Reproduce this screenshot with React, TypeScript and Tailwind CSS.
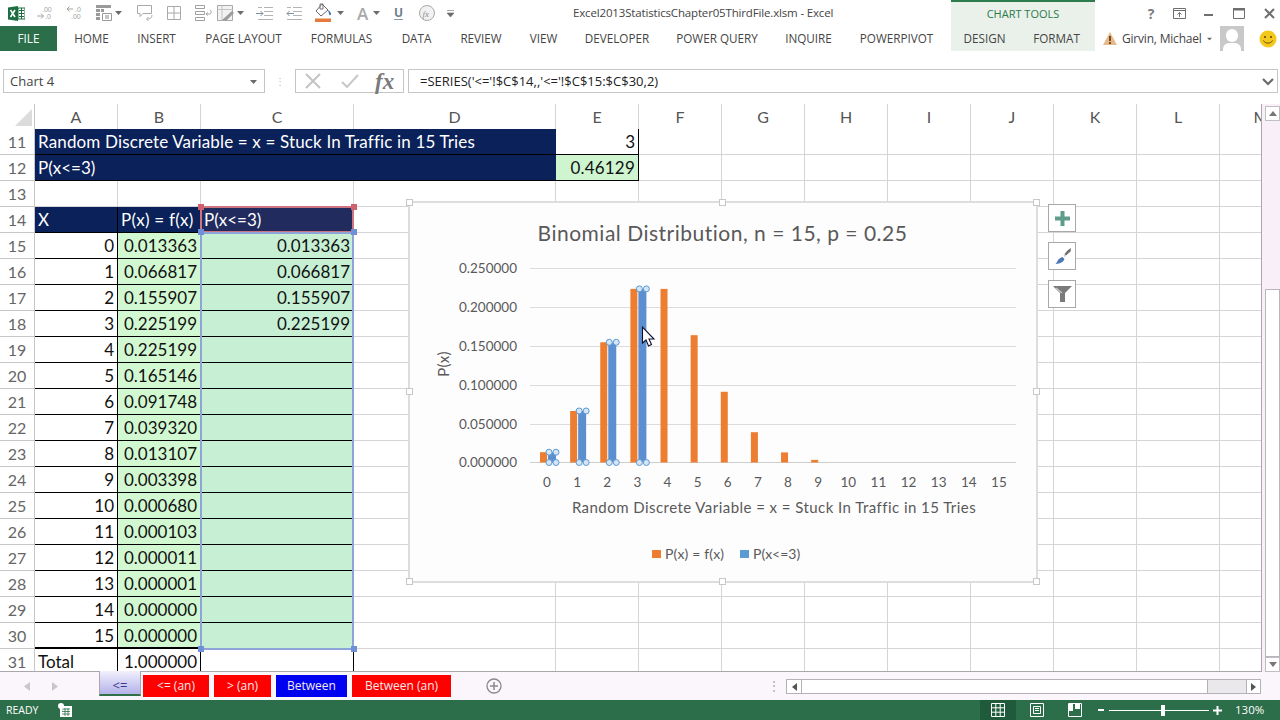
import React from 'react';

const ui = "font-['Open_Sans',sans-serif]";
const cal = "font-['Lato',sans-serif]";

const tabs = [
  { label: 'HOME', w: 'w-[69px]' },
  { label: 'INSERT', w: 'w-[61px]' },
  { label: 'PAGE LAYOUT', w: 'w-[113px]' },
  { label: 'FORMULAS', w: 'w-[83px]' },
  { label: 'DATA', w: 'w-[67px]' },
  { label: 'REVIEW', w: 'w-[62px]' },
  { label: 'VIEW', w: 'w-[63px]' },
  { label: 'DEVELOPER', w: 'w-[84px]' },
  { label: 'POWER QUERY', w: 'w-[116px]' },
  { label: 'INQUIRE', w: 'w-[67px]' },
  { label: 'POWERPIVOT', w: 'w-[109px]' },
];

const columns = ['A', 'B', 'C', 'D', 'E', 'F', 'G', 'H', 'I', 'J', 'K', 'L', 'M'];
const gridCols = 'grid grid-cols-[35px_83px_83px_153px_202px_83px_83px_83px_83px_83px_83px_83px_83px_83px] grid-rows-[25px] auto-rows-[26px]';
const cell = 'border-r border-b border-[#d6d4d8]';
const rowHead = `border-r border-b border-[#c8c6ca] flex items-center justify-center text-[16px] text-[#666666] ${cal}`;

const values = [
  '0.013363', '0.066817', '0.155907', '0.225199', '0.225199', '0.165146', '0.091748', '0.039320',
  '0.013107', '0.003398', '0.000680', '0.000103', '0.000011', '0.000001', '0.000000', '0.000000',
];
const heights = values.map(Number);

const Empties = ({ n }: { n: number }) => (
  <>
    {Array.from({ length: n }).map((_, i) => (
      <div key={i} className={cell} />
    ))}
  </>
);

const Caret = ({ className = '' }: { className?: string }) => (
  <svg width="7" height="4" viewBox="0 0 7 4" className={className}>
    <path d="M0 0h7L3.500 4z" fill="#6b6b6b" />
  </svg>
);

const QuickAccess = () => (
  <div className="flex items-center w-[573px] h-full">
    <svg width="17" height="15" viewBox="0 0 17 15" className="ml-[8px]">
      <path d="M0 1.500 10 0v15L0 13.500z" fill="#1d6f42" />
      <path d="M10 2h7v11h-7z" fill="#fff" stroke="#1d6f42" />
      <path d="M11 4.500h5M11 7.500h5M11 10.500h5M13.500 2v11" stroke="#1d6f42" />
      <path d="M2.500 4 7 11M7 4l-4.500 7" stroke="#fff" strokeWidth="1.600" />
    </svg>
    <svg width="16" height="16" viewBox="0 0 16 16" className="ml-[12px]" fill="#a3a3a3" fontSize="7" fontFamily="Liberation Sans">
      <text x="5" y="6.500">.00</text>
      <text x="8" y="14">.0</text>
      <path d="M0 11h6M4 8.500 6.500 11 4 13.500" stroke="#a3a3a3" fill="none" />
    </svg>
    <svg width="16" height="16" viewBox="0 0 16 16" className="ml-[13px]" fill="#a3a3a3" fontSize="7" fontFamily="Liberation Sans">
      <text x="9" y="6.500">.0</text>
      <text x="5" y="14">.00</text>
      <path d="M7 4H1M3.500 1.500 1 4l2.500 2.500" stroke="#a3a3a3" fill="none" />
    </svg>
    <svg width="17" height="16" viewBox="0 0 17 16" className="ml-[14px]">
      <path d="M0 0h15v3H0zM0 4h4v3H0zM0 8h4v3H0zM0 12h4v3H0zM5 4h3v3H5z" fill="#9a9a9a" />
      <path d="M6.500 8.500h9v7h-9z" fill="#fff" stroke="#9a9a9a" />
      <path d="M9 11h4M9 13h4" stroke="#8a8a8a" />
    </svg>
    <Caret className="ml-[2px]" />
    <svg width="17" height="16" viewBox="0 0 17 16" className="ml-[15px]">
      <path d="M.5.500h14v8H6l-3 3V8.500H.5z" fill="#fff" stroke="#a8a8a8" />
      <path d="M15 10c0 3-2 4-5 4M11.500 12 9.500 14l2 2" fill="none" stroke="#a8b4a8" />
    </svg>
    <svg width="14" height="14" viewBox="0 0 14 14" className="ml-[13px]">
      <path d="M.5.500h13v13H.5zM7 .5v13M.5 7h13" fill="none" stroke="#a8a8a8" />
    </svg>
    <svg width="17" height="16" viewBox="0 0 17 16" className="ml-[14px]">
      <path d="M.5.500h9v3h-9zM.5 6.500h9v3h-9zM.5 12.500h9v3h-9z" fill="#fff" stroke="#a0a0a0" />
      <path d="M11 9h4c1.500 0 1.500-4 0-4M13 7.500 11 9l2 1.500" fill="none" stroke="#a8a8a8" />
    </svg>
    <svg width="18" height="17" viewBox="0 0 18 17" className="ml-[5px]">
      <path d="M.5.500h15v15H.5z" fill="#f2f2f2" stroke="#a8a8a8" />
      <path d="M.5 4.500h15M5 .5v15" stroke="#c4c4c4" />
      <path d="M5 15 15 6l2 2-8 8z" fill="#9c9c9c" />
    </svg>
    <Caret className="ml-[2px]" />
    <svg width="17" height="13" viewBox="0 0 17 13" className="ml-[12px]">
      <path d="M8 .5h9M8 4.500h9M8 8.500h9M2 12.500h15M2 .5h4" stroke="#b4b4b4" />
      <path d="M0 6.500h7M4.500 4 7 6.500 4.500 9" fill="none" stroke="#7e8e9e" />
    </svg>
    <svg width="16" height="13" viewBox="0 0 16 13" className="ml-[13px]">
      <path d="M7 .5h9M7 4.500h9M7 8.500h9M1 12.500h15M1 .5h4" stroke="#b4b4b4" />
      <path d="M8 6.500H1M3.500 4 1 6.500 3.500 9" fill="none" stroke="#7e8e9e" />
    </svg>
    <svg width="17" height="20" viewBox="0 0 17 20" className="ml-[13px]">
      <path d="M7 1 1 8l5 5 7-6z" fill="#fff" stroke="#666" />
      <path d="M5 1h3v5H5z" fill="none" stroke="#777" />
      <path d="M13 7c2 1 3 3 3 4 0 1.500-2 1.500-2 0 0-1-1-3-1-4z" fill="#3f6fa8" />
      <path d="M0 15.500h16V19H0z" fill="#e57a3c" />
    </svg>
    <Caret className="ml-[5px]" />
    <span className={`ml-[13px] w-[11px] text-[17px] leading-none text-[#a8a8a8] font-semibold ${ui}`}>A</span>
    <Caret className="ml-[5px]" />
    <span className={`ml-[14px] w-[9px] text-[12px] leading-[13px] border-b border-[#8a9aaa] text-[#6f7f8f] font-bold ${ui}`}>U</span>
    <svg width="16" height="16" viewBox="0 0 16 16" className="ml-[16px]">
      <circle cx="8" cy="8" r="7.500" fill="#f1f1f1" stroke="#a8a8a8" />
      <text x="3.500" y="11.500" fontSize="9" fontStyle="italic" fontFamily="Liberation Serif" fill="#8c8c8c">fx</text>
    </svg>
    <svg width="7" height="7" viewBox="0 0 7 7" className="ml-[12px]">
      <path d="M0 .5h7M0 3h7L3.500 7z" fill="#6b6b6b" stroke="#6b6b6b" strokeWidth=".6" />
    </svg>
  </div>
);

const WindowButtons = () => (
  <div className="flex items-center h-full">
    <span className={`w-[12px] text-center text-[14px] font-bold text-[#7b7b7b] ${ui} ml-[50px]`}>?</span>
    <svg width="13" height="11" viewBox="0 0 13 11" className="ml-[16px]">
      <path d="M.5.500h12v10H.5zM.5 2.500h12M6.500 9V4.500M4.500 6.500l2-2 2 2" fill="none" stroke="#6f6f6f" />
    </svg>
    <div className="w-[9px] h-[2px] bg-[#6f6f6f] ml-[18px] mt-[3px]" />
    <svg width="12" height="11" viewBox="0 0 12 11" className="ml-[20px]">
      <path d="M.5.500h11v10H.5z" fill="none" stroke="#6f6f6f" />
      <path d="M0 0h12v2.500H0z" fill="#6f6f6f" />
    </svg>
    <svg width="11" height="11" viewBox="0 0 11 11" className="ml-[19px]">
      <path d="M1 1l9 9M10 1l-9 9" stroke="#6f6f6f" strokeWidth="2" />
    </svg>
  </div>
);

const ChartPlot = () => {
  const gridY = [268, 307, 346, 385, 424, 462];
  const yLabels = ['0.250000', '0.200000', '0.150000', '0.100000', '0.050000', '0.000000'];
  const left = (i: number) => 540 + 30.13 * i;
  const top = (v: number) => 462.5 - v * 771;
  return (
    <svg viewBox="410 203 626 378" width="626" height="378" fontFamily="Lato, sans-serif" fill="#595959" className="block">
      <text x="722.500" y="240.500" fontSize="21" letterSpacing="0.5" textAnchor="middle">Binomial Distribution, n = 15, p = 0.25</text>
      {gridY.map((y, i) => (
        <g key={y}>
          <line x1="530" x2="1016" y1={y + 0.5} y2={y + 0.5} stroke={i === 5 ? '#cfcfcf' : '#dcdcdc'} />
          <text x="517" y={y + 5} fontSize="13.500" textAnchor="end">{yLabels[i]}</text>
        </g>
      ))}
      {heights.map((v, i) => (
        <g key={i}>
          {v > 0.001 && <rect x={left(i)} y={top(v)} width="7" height={462.5 - top(v)} fill="#ed7d31" />}
          <text x={left(i) + 7} y="487" fontSize="13.500" textAnchor="middle">{i}</text>
        </g>
      ))}
      {heights.slice(0, 4).map((v, i) => (
        <g key={i} fill="#d6e4f3" stroke="#5b9bd5">
          <rect x={left(i) + 8} y={top(v)} width="8" height={462.5 - top(v)} fill="#5b8fd0" stroke="none" />
          {[top(v), 462.5].map((cy) => (
            <g key={cy}>
              <circle cx={left(i) + 9} cy={cy} r="3" />
              <circle cx={left(i) + 16} cy={cy} r="3" />
            </g>
          ))}
        </g>
      ))}
      <text x="774" y="513" fontSize="15" letterSpacing="0.45" textAnchor="middle">Random Discrete Variable = x = Stuck In Traffic in 15 Tries</text>
      <text x="0" y="0" fontSize="15" letterSpacing="0.3" textAnchor="middle" transform="translate(449 364) rotate(-90)">P(x)</text>
      <rect x="652" y="550" width="9" height="8" fill="#ed7d31" />
      <text x="665" y="559" fontSize="14" letterSpacing="0.15">P(x) = f(x)</text>
      <rect x="740" y="550" width="9" height="8" fill="#5b9bd5" />
      <text x="753" y="559" fontSize="14">P(x&lt;=3)</text>
      <path d="M642.500 327v16l3.500-3 2.500 6 3-1.500-2.500-5.500h5z" fill="#fff" stroke="#101030" strokeWidth="1.100" />
    </svg>
  );
};

const Handle = ({ className }: { className: string }) => (
  <div className={`absolute w-[7px] h-[7px] bg-white border border-[#c8c8c8] ${className}`} />
);

const Dot = ({ className }: { className: string }) => (
  <div className={`absolute w-[6px] h-[6px] ${className}`} />
);

const SideButton = ({ children }: { children: React.ReactNode }) => (
  <div className="w-[28px] h-[28px] bg-white border border-[#a8a8a8] flex items-center justify-center">{children}</div>
);

const Sheet = () => (
  <div className="relative w-[1262px] h-[568px] overflow-hidden border-r border-b border-[#a9a7ab]">
    <div className={gridCols}>
      {/* column header */}
      <div className="relative border-r border-[#c8c6ca]">
        <svg width="17" height="17" viewBox="0 0 17 17" className="absolute left-[15px] top-[5px]">
          <path d="M17 0v17H0z" fill="#dcdcdc" />
        </svg>
      </div>
      {columns.map((c) => (
        <div key={c} className={`border-r border-[#d6d4d8] flex items-center justify-center text-[16px] text-[#555555] ${cal}`}>
          {c}
        </div>
      ))}

      {/* 11 */}
      <div className={rowHead}>11</div>
      <div className={`col-span-4 bg-[#0a2159] border-b border-black text-white text-[17px] px-[3px] leading-[25px] tracking-[0.15px] ${cal}`}>
        Random Discrete Variable = x = Stuck In Traffic in 15 Tries
      </div>
      <div className={`border-r border-b border-black text-right text-[#111] text-[17px] px-[3px] leading-[25px] ${cal}`}>3</div>
      <Empties n={8} />

      {/* 12 */}
      <div className={rowHead}>12</div>
      <div className={`col-span-4 bg-[#0a2159] border-b border-black text-white text-[17px] px-[3px] leading-[25px] ${cal}`}>P(x&lt;=3)</div>
      <div className={`bg-[#cff5d0] border-r border-b border-black text-right text-[#111] text-[17px] px-[3px] leading-[25px] tracking-[0.2px] ${cal}`}>0.46129</div>
      <Empties n={8} />

      {/* 13 */}
      <div className={rowHead}>13</div>
      <Empties n={13} />

      {/* 14 */}
      <div className={rowHead}>14</div>
      <div className={`bg-[#0a2159] border-r border-b border-black text-white text-[17px] px-[3px] leading-[25px] ${cal}`}>X</div>
      <div className={`bg-[#0a2159] border-r border-b border-black text-white text-[17px] px-[3px] leading-[25px] whitespace-nowrap tracking-[0.25px] ${cal}`}>P(x) = f(x)</div>
      <div className={`bg-[#212b5e] text-white text-[17px] px-[3px] leading-[25px] ${cal}`}>P(x&lt;=3)</div>
      <Empties n={10} />

      {/* 15-30 */}
      {values.map((v, i) => {
        const last = i === values.length - 1;
        const bottom = last ? 'border-b-2' : 'border-b';
        return (
          <React.Fragment key={i}>
            <div className={rowHead}>{i + 15}</div>
            <div className={`border-r ${bottom} border-black text-right text-[#111] text-[17px] px-[3px] leading-[25px] ${cal}`}>{i}</div>
            <div className={`bg-[#d2f8d2] border-r ${bottom} border-black text-right text-[#111] text-[17px] px-[3px] leading-[25px] ${cal}`}>{v}</div>
            <div className={`bg-[#c6efd4] border-b border-black text-right text-[#111] text-[17px] pl-[3px] pr-[4px] leading-[25px] ${cal}`}>
              {i < 4 ? values[i] : ''}
            </div>
            <Empties n={10} />
          </React.Fragment>
        );
      })}

      {/* 31 */}
      <div className={rowHead}>31</div>
      <div className={`border-r border-black text-[#111] text-[17px] px-[3px] leading-[25px] ${cal}`}>Total</div>
      <div className={`border-r border-black text-right text-[#111] text-[17px] px-[3px] leading-[25px] ${cal}`}>1.000000</div>
      <div className="border-r border-black" />
      <Empties n={10} />
    </div>

    {/* formula range highlights */}
    <div className="absolute left-[200px] top-[102px] w-[154px] h-[27px] border-2 border-[#cd7580]" />
    <div className="absolute left-[200px] top-[128px] w-[154px] h-[418px] border-2 border-[#8ea3d8]" />
    <Dot className="left-[198px] top-[100px] bg-[#d0606e]" />
    <Dot className="left-[351px] top-[100px] bg-[#d0606e]" />
    <Dot className="left-[198px] top-[125px] bg-[#6f8fd6]" />
    <Dot className="left-[351px] top-[125px] bg-[#6f8fd6]" />
    <Dot className="left-[198px] top-[542px] bg-[#6f8fd6]" />
    <Dot className="left-[351px] top-[542px] bg-[#6f8fd6]" />

    {/* chart */}
    <div className="absolute left-[410px] top-[99px] w-[626px] h-[378px] bg-[#fefdfe] outline-2 outline-[#dddcdf]">
      <ChartPlot />
      <Handle className="-left-[4px] -top-[4px]" />
      <Handle className="left-[309px] -top-[4px]" />
      <Handle className="-right-[4px] -top-[4px]" />
      <Handle className="-left-[4px] top-[185px]" />
      <Handle className="-right-[4px] top-[185px]" />
      <Handle className="-left-[4px] -bottom-[4px]" />
      <Handle className="left-[309px] -bottom-[4px]" />
      <Handle className="-right-[4px] -bottom-[4px]" />
    </div>

    {/* chart buttons */}
    <div className="absolute left-[1048px] top-[100px] flex flex-col gap-[10px]">
      <SideButton>
        <svg width="15" height="15" viewBox="0 0 15 15">
          <path d="M5.500 0h4v5.500H15v4H9.500V15h-4V9.500H0v-4h5.500z" fill="#5f9c8a" />
        </svg>
      </SideButton>
      <SideButton>
        <svg width="19" height="19" viewBox="0 0 19 19">
          <path d="M18 1l-.5 3.500-4.500 4-1.500-1.500 3.500-4z" fill="#6d6d6d" />
          <path d="M11.500 7.500l1.500 1.500-1 1-1.500-1.500z" fill="#c4c4c4" />
          <path d="M9.500 10l2 2c-1 3-4 4.500-9 5 1-1 1.500-2 2-3 1-2 3-3.500 5-4z" fill="#4d78b8" />
        </svg>
      </SideButton>
      <SideButton>
        <svg width="19" height="16" viewBox="0 0 19 16">
          <path d="M0 0h19l-7 7v9H7V7z" fill="#7a7a7a" />
          <path d="M3 2l6 5" stroke="#c4c4c4" strokeWidth="1.500" />
        </svg>
      </SideButton>
    </div>
  </div>
);

const VerticalScroll = () => (
  <div className="relative w-[18px] h-[568px] bg-[#f8eff9]">
    <div className="absolute left-[3px] top-[2px] w-[15px] h-[15px] bg-white border border-[#c0bec2] flex items-center justify-center">
      <svg width="8" height="5" viewBox="0 0 8 5"><path d="M0 5h8L4 0z" fill="#777" /></svg>
    </div>
    <div className="absolute left-[3px] top-[185px] w-[15px] h-[368px] bg-white border border-[#b8b6ba]" />
    <div className="absolute left-[3px] bottom-[0px] w-[15px] h-[15px] bg-white border border-[#c0bec2] flex items-center justify-center">
      <svg width="8" height="5" viewBox="0 0 8 5"><path d="M0 0h8L4 5z" fill="#777" /></svg>
    </div>
  </div>
);

const SheetTab = ({ label, className }: { label: string; className: string }) => (
  <div className={`h-[22px] mt-[3px] flex items-center justify-center text-[12px] text-[#f4e8e8] ${ui} ${className}`}>{label}</div>
);

export default function App() {
  return (
    <div className="w-[1280px] h-[720px] overflow-hidden bg-white flex flex-col">
      {/* title bar */}
      <div className="h-[26px] flex items-center shrink-0">
        <QuickAccess />
        <div className={`w-[260px] whitespace-nowrap text-[11.500px] text-[#444444] tracking-[-0.16px] ${ui}`}>Excel2013StatisticsChapter05ThirdFile.xlsm - Excel</div>
        <div className="w-[118px]" />
        <div className={`w-[144px] h-full bg-[#eaf1ea] border-t-2 border-[#2f7d4f] flex items-center justify-center text-[11px] text-[#2c7a4b] ${ui}`}>
          CHART TOOLS
        </div>
        <WindowButtons />
      </div>

      {/* ribbon tabs */}
      <div className={`h-[25px] flex items-center shrink-0 text-[11.700px] text-[#444444] ${ui}`}>
        <div className="w-[57px] h-full bg-[#2a6f4a] text-white flex items-center justify-center">FILE</div>
        {tabs.map((t) => (
          <div key={t.label} className={`${t.w} text-center whitespace-nowrap`}>{t.label}</div>
        ))}
        <div className="w-[67px] h-full bg-[#eaf1ea] flex items-center justify-center">DESIGN</div>
        <div className="w-[77px] h-full bg-[#eaf1ea] flex items-center justify-center">FORMAT</div>
        <svg width="14" height="13" viewBox="0 0 14 13" className="ml-[8px] shrink-0">
          <path d="M7 0l7 13H0z" fill="#e6b98a" />
          <path d="M6 4h2v5H6zM6 10h2v2H6z" fill="#7a4a1c" />
        </svg>
        <span className="ml-[5px] w-[79px] text-[12px] whitespace-nowrap tracking-[-0.2px]">Girvin, Michael</span>
        <Caret className="ml-[5px] scale-75 shrink-0" />
        <div className="ml-[7px] w-[24px] h-[25px] bg-[#c9c9c9] relative overflow-hidden shrink-0">
          <div className="absolute left-[6px] top-[3px] w-[12px] h-[13px] rounded-full bg-white" />
          <div className="absolute left-[3px] top-[17px] w-[18px] h-[10px] rounded-t-[6px] bg-white" />
        </div>
        <svg width="18" height="18" viewBox="0 0 18 18" className="ml-[15px] shrink-0">
          <circle cx="9" cy="9" r="8.500" fill="#f2c81c" />
          <circle cx="6" cy="7" r="1.100" fill="#6b4a00" />
          <circle cx="12" cy="7" r="1.100" fill="#6b4a00" />
          <path d="M4.500 10.500c1.500 3.500 7.500 3.500 9 0" fill="none" stroke="#6b4a00" />
        </svg>
      </div>

      {/* formula bar */}
      <div className="h-[53px] pt-[18px] shrink-0">
        <div className={`h-[24px] flex items-center ${ui} text-[12px] text-[#444444]`}>
          <div className="ml-[3px] w-[262px] h-full bg-white border border-[#c6c6c6] flex items-center justify-between pl-[6px] pr-[7px] pt-[1px] text-[13px]">
            <span>Chart 4</span>
            <Caret />
          </div>
          <div className="w-[30px] flex justify-center text-[#b8b8b8] text-[10px] tracking-tight">⋮</div>
          <div className="w-[109px] h-full border border-[#c6c6c6] flex items-center pl-[9px]">
            <svg width="16" height="16" viewBox="0 0 16 16"><path d="M1 1l14 14M15 1 1 15" stroke="#c4c4c4" strokeWidth="2" /></svg>
            <svg width="18" height="14" viewBox="0 0 18 14" className="ml-[20px]"><path d="M1 8l5 5L17 1" fill="none" stroke="#c8c8c8" strokeWidth="2" /></svg>
            <span className="ml-[16px] font-['Liberation_Serif',serif] italic font-bold text-[23px] leading-none text-[#7a7a7a]">fx</span>
          </div>
          <div className="ml-[4px] w-[870px] h-full border border-[#c6c6c6] flex items-center justify-between pl-[11px] pr-[3px] pt-[1px] text-[13px] text-[#222222]">
            <span>=SERIES('&lt;='!$C$14,,'&lt;='!$C$15:$C$30,2)</span>
            <svg width="12" height="8" viewBox="0 0 12 8"><path d="M1 1l5 5 5-5" fill="none" stroke="#6b6b6b" strokeWidth="2.200" /></svg>
          </div>
        </div>
      </div>

      {/* worksheet */}
      <div className="flex shrink-0">
        <Sheet />
        <VerticalScroll />
      </div>

      {/* sheet tabs */}
      <div className="h-[28px] bg-[#fbf6fb] flex shrink-0 relative">
        <svg width="6" height="9" viewBox="0 0 6 9" className="ml-[24px] mt-[10px]"><path d="M6 0v9L0 4.500z" fill="#c8c6ca" /></svg>
        <svg width="6" height="9" viewBox="0 0 6 9" className="ml-[22px] mt-[10px]"><path d="M0 0v9l6-4.500z" fill="#c8c6ca" /></svg>
        <div className={`ml-[41px] w-[42px] h-[25px] pt-[6px] bg-gradient-to-b from-[#f2f0fb] to-[#b4b2ea] border-x border-[#a9a7ab] border-b-2 border-b-[#2f7049] -mt-[1px] flex items-center justify-center text-[13px] text-[#3a3a8a] ${ui}`}>
          &lt;=
        </div>
        <SheetTab label="<= (an)" className="ml-[2px] w-[66px] bg-[#ff0000]" />
        <SheetTab label="> (an)" className="ml-[5px] w-[57px] bg-[#ff0000]" />
        <SheetTab label="Between" className="ml-[5px] w-[71px] bg-[#0000f0]" />
        <SheetTab label="Between (an)" className="ml-[5px] w-[99px] bg-[#ff0000]" />
        <svg width="16" height="16" viewBox="0 0 16 16" className="ml-[35px] mt-[6px]">
          <circle cx="8" cy="8" r="7" fill="none" stroke="#8a8a8a" strokeWidth="1.300" />
          <path d="M8 4v8M4 8h8" stroke="#8a8a8a" strokeWidth="1.500" />
        </svg>
        <div className="ml-[266px] mt-[7px] text-[#a8a8a8] text-[12px] leading-[14px] w-[10px]">⋮</div>
        <div className="ml-[8px] mt-[7px] w-[475px] h-[15px] border border-[#b4b2b6] flex bg-[#ebe8ec]">
          <div className="w-[15px] h-full bg-white border-r border-[#b4b2b6] flex items-center justify-center">
            <svg width="5" height="8" viewBox="0 0 5 8"><path d="M5 0v8L0 4z" fill="#555" /></svg>
          </div>
          <div className="w-[406px] h-full bg-white border-r border-[#b4b2b6]" />
          <div className="ml-auto w-[14px] h-full bg-white border-l border-[#b4b2b6] flex items-center justify-center">
            <svg width="5" height="8" viewBox="0 0 5 8"><path d="M0 0v8l5-4z" fill="#555" /></svg>
          </div>
        </div>
      </div>

      {/* status bar */}
      <div className={`h-[20px] bg-[#2c6e4a] flex items-center shrink-0 text-white text-[10.500px] ${ui}`}>
        <span className="ml-[6px] w-[32px] pt-[1px]">READY</span>
        <svg width="14" height="14" viewBox="0 0 14 14" className="ml-[20px]">
          <path d="M2 3h12v11H2z" fill="#fff" />
          <path d="M4 6h8M4 8.500h8M4 11h8M7 5v8M10 5v8" stroke="#2c6e4a" strokeWidth=".8" />
          <circle cx="3" cy="3" r="3" fill="#fff" />
        </svg>
        <div className="ml-[908px] w-[36px] h-full bg-[#1f5a3a] flex items-center justify-center">
          <svg width="14" height="14" viewBox="0 0 14 14"><path d="M.5.500h13v13H.5zM.5 4.800h13M.5 9.200h13M4.800.5v13M9.200.5v13" fill="none" stroke="#fff" /></svg>
        </div>
        <svg width="14" height="14" viewBox="0 0 14 14" className="ml-[14px]">
          <path d="M.5.500h13v13H.5zM3.500 3.500h7v7h-7zM5 5.500h4M5 7.500h4" fill="none" stroke="#fff" />
        </svg>
        <svg width="14" height="14" viewBox="0 0 14 14" className="ml-[24px]">
          <path d="M.5.500h13v13H.5z" fill="none" stroke="#fff" />
          <path d="M1 1h4v7H1zM7 1h5v5H7z" fill="#fff" />
        </svg>
        <div className="ml-[16px] w-[6px] h-[2px] bg-white" />
        <div className="ml-[5px] w-[100px] h-[1px] bg-white relative">
          <div className="absolute left-[52px] -top-[5px] w-[4px] h-[11px] bg-white" />
        </div>
        <svg width="9" height="9" viewBox="0 0 9 9" className="ml-[4px]"><path d="M3.500 0h2v3.500H9v2H5.500V9h-2V5.500H0v-2h3.500z" fill="#fff" /></svg>
        <span className="ml-[13px] text-[11.500px] whitespace-nowrap">130%</span>
      </div>
    </div>
  );
}
